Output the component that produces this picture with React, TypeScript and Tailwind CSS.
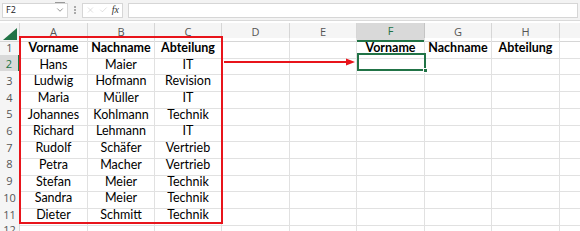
import { X, Check, ChevronDown } from 'lucide-react';

const cols = ['A', 'B', 'C', 'D', 'E', 'F', 'G', 'H', 'I'];

const rows: string[][] = [
  ['Vorname', 'Nachname', 'Abteilung', '', '', 'Vorname', 'Nachname', 'Abteilung', ''],
  ['Hans', 'Maier', 'IT'],
  ['Ludwig', 'Hofmann', 'Revision'],
  ['Maria', 'Müller', 'IT'],
  ['Johannes', 'Kohlmann', 'Technik'],
  ['Richard', 'Lehmann', 'IT'],
  ['Rudolf', 'Schäfer', 'Vertrieb'],
  ['Petra', 'Macher', 'Vertrieb'],
  ['Stefan', 'Meier', 'Technik'],
  ['Sandra', 'Meier', 'Technik'],
  ['Dieter', 'Schmitt', 'Technik'],
  [],
];

const grid = 'grid grid-cols-[20px_68px_67px_67px_68px_67px_68px_67px_68px_67px]';

export default function App() {
  return (
    <div className="relative w-[580px] h-[231px] overflow-hidden bg-white font-['Lato',sans-serif]">
      {/* Formula bar */}
      <div className="flex items-center gap-[3px] h-[21px] bg-[#f3f3f3] px-[2px] border-b border-[#dadada]">
        <div className="relative flex items-center justify-between w-[66px] h-[15px] bg-white border border-[#d6d6d6] pl-[3px] pr-[2px] font-['Open_Sans',sans-serif] text-[9px] text-[#222]">
          <span>F2</span>
          <ChevronDown size={10} strokeWidth={1.5} className="text-[#555]" />
          <div className="absolute right-[2px] top-[-2px] w-[10px] h-[1px] bg-[#999]" />
        </div>
        <div className="flex flex-col gap-[1px] px-[3px]">
          <div className="w-[2px] h-[2px] bg-[#aaa]" />
          <div className="w-[2px] h-[2px] bg-[#aaa]" />
          <div className="w-[2px] h-[2px] bg-[#aaa]" />
        </div>
        <div className="flex items-center gap-[4px] w-[41px] h-[15px] bg-white border border-[#d6d6d6] px-[3px]">
          <X size={10} strokeWidth={1.2} className="text-[#b8b8b8]" />
          <Check size={10} strokeWidth={1.2} className="text-[#b8b8b8]" />
          <span className="font-['Liberation_Serif',serif] italic text-[10px] text-[#333] leading-none">fx</span>
        </div>
        <div className="flex-1 h-[15px] bg-white border border-[#d6d6d6] ml-[2px]" />
      </div>

      <div className="h-[2px] bg-white" />

      {/* Column headers */}
      <div className={`${grid} h-[15px] bg-[#f5f5f5]`}>
        <div className="relative border-r border-b border-[#d6d6d6]">
          <svg width="14" height="12" viewBox="0 0 14 12" className="absolute right-[2px] bottom-[1px]">
            <polygon points="14,0 14,12 0,12" fill="#217346" />
          </svg>
        </div>
        {cols.map((c) => (
          <div
            key={c}
            className={
              c === 'F'
                ? "flex items-center justify-center bg-[#d9d9d9] border-r border-[#c4c4c4] border-b-2 border-b-[#217346] text-[#217346] text-[11px] font-['Open_Sans',sans-serif]"
                : "flex items-center justify-center border-r border-b border-[#d6d6d6] text-[#555] text-[11px] font-['Open_Sans',sans-serif]"
            }
          >
            {c}
          </div>
        ))}
      </div>

      {/* Rows */}
      {rows.map((r, i) => (
        <div key={i} className={`${grid} h-[16.7px]`}>
          <div
            className={
              i === 1
                ? "flex items-center justify-center bg-[#d9d9d9] border-r-2 border-r-[#217346] border-b border-[#c4c4c4] text-[#217346] text-[11px] font-['Open_Sans',sans-serif]"
                : "flex items-center justify-center bg-[#f5f5f5] border-r border-b border-[#d6d6d6] text-[#555] text-[11px] font-['Open_Sans',sans-serif]"
            }
          >
            {i + 1}
          </div>
          {cols.map((c, j) => (
            <div
              key={c}
              className={
                i === 0
                  ? 'flex items-center justify-center pt-[1px] border-r border-b border-[#e1e1e1] text-[12.5px] font-bold text-black'
                  : 'flex items-center justify-center pt-[1px] border-r border-b border-[#e1e1e1] text-[12.5px] text-black'
              }
            >
              {r[j] ?? ''}
            </div>
          ))}
        </div>
      ))}

      {/* Red frame around source data */}
      <div className="absolute left-[19px] top-[36px] w-[204px] h-[188px] border-[2.5px] border-[#e8141b]" />

      {/* Arrow */}
      <svg className="absolute left-[224px] top-[57px]" width="132" height="10" viewBox="0 0 132 10">
        <line x1="0" y1="5" x2="124" y2="5" stroke="#e8141b" strokeWidth="2" />
        <polygon points="122,1.5 131,5 122,8.5" fill="#e8141b" />
      </svg>

      {/* Selected cell F2 */}
      <div className="absolute left-[357px] top-[53px] w-[69px] h-[18px] border-2 border-[#217346]">
        <div className="absolute right-[-4px] bottom-[-4px] w-[5px] h-[5px] bg-[#217346] border border-white" />
      </div>
    </div>
  );
}
